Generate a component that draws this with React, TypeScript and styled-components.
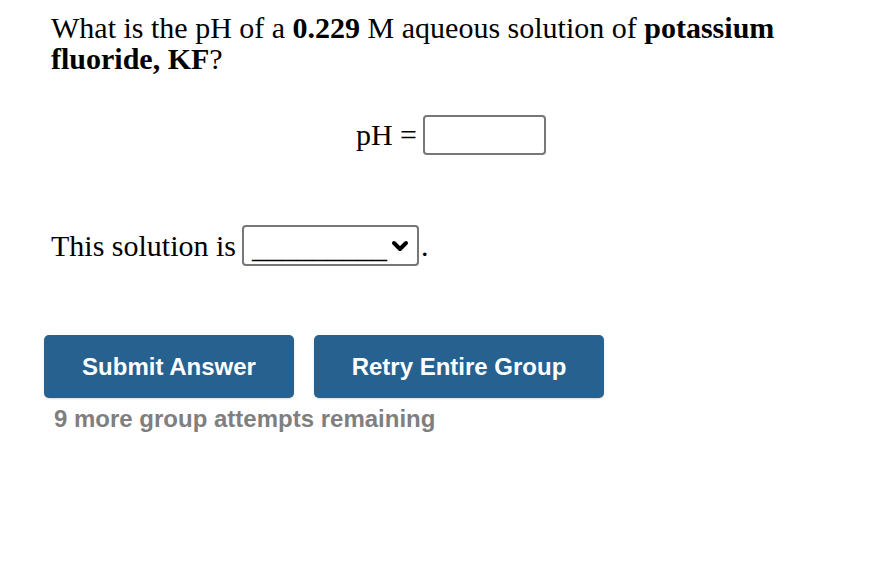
import React from "react";
import styled, { createGlobalStyle } from "styled-components";

const Global = createGlobalStyle`
  html, body { margin: 0; padding: 0; background: #fff; }
  body { font-family: "Liberation Serif", "Times New Roman", serif; color: #000; }
`;

const Page = styled.div`
  width: 882px;
  height: 564px;
  padding: 12px 24px 0 44px;
  box-sizing: border-box;
`;

const Question = styled.p`
  margin: 0 0 0 7px;
  font-size: 30px;
  line-height: 31px;
  max-width: 760px;
`;

const EquationRow = styled.div`
  display: flex;
  justify-content: center;
  align-items: center;
  gap: 6px;
  margin-top: 41px;
  font-size: 30px;
`;

const TextInput = styled.input`
  width: 123px;
  height: 40px;
  box-sizing: border-box;
  border: 2px solid #777;
  border-radius: 4px;
  background: #fff;
`;

const SentenceRow = styled.div`
  display: flex;
  align-items: center;
  margin: 70px 0 0 7px;
  font-size: 30px;
  gap: 6px;
`;

const SelectBox = styled.div`
  width: 177px;
  height: 41px;
  box-sizing: border-box;
  border: 2px solid #777;
  border-radius: 4px;
  display: flex;
  align-items: center;
  justify-content: space-between;
  padding: 0 7px 0 8px;
  font-size: 30px;
`;

const Blank = styled.span`
  line-height: 1;
  margin-top: 4px;
`;

const Dot = styled.span`
  margin-left: -4px;
`;

const ButtonRow = styled.div`
  display: flex;
  gap: 20px;
  margin-top: 69px;
`;

const Button = styled.button<{ $w: number }>`
  width: ${(p) => p.$w}px;
  height: 63px;
  background: #27618f;
  color: #fff;
  border: none;
  border-radius: 5px;
  font-family: "Liberation Sans", Arial, sans-serif;
  font-weight: bold;
  font-size: 24px;
  box-shadow: 0 1px 2px rgba(0, 0, 0, 0.15);
`;

const Remaining = styled.div`
  margin: 7px 0 0 10px;
  font-family: "Liberation Sans", Arial, sans-serif;
  font-weight: bold;
  font-size: 24px;
  color: #7f7f7f;
`;

export default function App() {
  return (
    <>
      <Global />
      <Page>
        <Question>
          What is the pH of a <b>0.229</b> M aqueous solution of <b>potassium fluoride, KF</b>?
        </Question>
        <EquationRow>
          <span>pH =</span>
          <TextInput type="text" />
        </EquationRow>
        <SentenceRow>
          <span>This solution is</span>
          <SelectBox>
            <Blank>_________</Blank>
            <svg width="20" height="14" viewBox="0 0 20 14">
              <path d="M4 4 L10 10 L16 4" fill="none" stroke="#000" strokeWidth="4" strokeLinecap="round" strokeLinejoin="round" />
            </svg>
          </SelectBox>
          <Dot>.</Dot>
        </SentenceRow>
        <ButtonRow>
          <Button $w={250}>Submit Answer</Button>
          <Button $w={290}>Retry Entire Group</Button>
        </ButtonRow>
        <Remaining>9 more group attempts remaining</Remaining>
      </Page>
    </>
  );
}
